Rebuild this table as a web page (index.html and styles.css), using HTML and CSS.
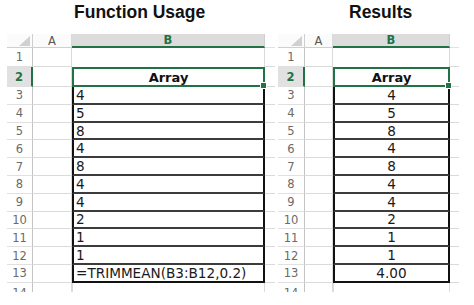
FILE: index.html
```html
<!DOCTYPE html>
<html>
<head>
<meta charset="utf-8">
<link rel="stylesheet" href="styles.css">
</head>
<body>
<div class="page">
  <section class="panel panel--left">
    <h1 class="title title--left">Function Usage</h1>
    <div class="sheet sheet--left">
      <div class="c corner"><svg class="tri" width="11" height="10" viewBox="0 0 11 10"><polygon points="11,0 11,10 0,10" fill="#d0d0d0"/></svg></div>
      <div class="c ch">A</div>
      <div class="c ch ch--sel">B</div>
      <div class="c x xh"></div>

      <div class="c rh">1</div><div class="c a"></div><div class="c b b--r1"></div><div class="c x"></div>
      <div class="c rh rh--sel">2</div><div class="c a"></div><div class="c b b--sel">Array<span class="handle"></span></div><div class="c x"></div>
      <div class="c rh">3</div><div class="c a"></div><div class="c b d">4</div><div class="c x"></div>
      <div class="c rh">4</div><div class="c a"></div><div class="c b d">5</div><div class="c x"></div>
      <div class="c rh">5</div><div class="c a"></div><div class="c b d">8</div><div class="c x"></div>
      <div class="c rh">6</div><div class="c a"></div><div class="c b d">4</div><div class="c x"></div>
      <div class="c rh">7</div><div class="c a"></div><div class="c b d">8</div><div class="c x"></div>
      <div class="c rh">8</div><div class="c a"></div><div class="c b d">4</div><div class="c x"></div>
      <div class="c rh">9</div><div class="c a"></div><div class="c b d">4</div><div class="c x"></div>
      <div class="c rh">10</div><div class="c a"></div><div class="c b d">2</div><div class="c x"></div>
      <div class="c rh">11</div><div class="c a"></div><div class="c b d">1</div><div class="c x"></div>
      <div class="c rh">12</div><div class="c a"></div><div class="c b d">1</div><div class="c x"></div>
      <div class="c rh">13</div><div class="c a"></div><div class="c b d d--last">=TRIMMEAN(B3:B12,0.2)</div><div class="c x"></div>
      <div class="c rh r14">14</div><div class="c a r14"></div><div class="c b r14"></div><div class="c x r14"></div>
    </div>
  </section>

  <section class="panel panel--right">
    <h1 class="title title--right">Results</h1>
    <div class="sheet sheet--right">
      <div class="c corner"><svg class="tri" width="11" height="10" viewBox="0 0 11 10"><polygon points="11,0 11,10 0,10" fill="#d0d0d0"/></svg></div>
      <div class="c ch">A</div>
      <div class="c ch ch--sel">B</div>
      <div class="c x xh"></div>

      <div class="c rh">1</div><div class="c a"></div><div class="c b b--r1"></div><div class="c x"></div>
      <div class="c rh rh--sel">2</div><div class="c a"></div><div class="c b b--sel">Array<span class="handle"></span></div><div class="c x"></div>
      <div class="c rh">3</div><div class="c a"></div><div class="c b d d--center">4</div><div class="c x"></div>
      <div class="c rh">4</div><div class="c a"></div><div class="c b d d--center">5</div><div class="c x"></div>
      <div class="c rh">5</div><div class="c a"></div><div class="c b d d--center">8</div><div class="c x"></div>
      <div class="c rh">6</div><div class="c a"></div><div class="c b d d--center">4</div><div class="c x"></div>
      <div class="c rh">7</div><div class="c a"></div><div class="c b d d--center">8</div><div class="c x"></div>
      <div class="c rh">8</div><div class="c a"></div><div class="c b d d--center">4</div><div class="c x"></div>
      <div class="c rh">9</div><div class="c a"></div><div class="c b d d--center">4</div><div class="c x"></div>
      <div class="c rh">10</div><div class="c a"></div><div class="c b d d--center">2</div><div class="c x"></div>
      <div class="c rh">11</div><div class="c a"></div><div class="c b d d--center">1</div><div class="c x"></div>
      <div class="c rh">12</div><div class="c a"></div><div class="c b d d--center">1</div><div class="c x"></div>
      <div class="c rh">13</div><div class="c a"></div><div class="c b d d--center d--last">4.00</div><div class="c x"></div>
      <div class="c rh r14">14</div><div class="c a r14"></div><div class="c b r14"></div><div class="c x r14"></div>
    </div>
  </section>
</div>
</body>
</html>
```

FILE: styles.css
```css
html, body {
  margin: 0;
  padding: 0;
  background: #ffffff;
}

body {
  width: 474px;
  height: 305px;
  overflow: hidden;
  font-family: "DejaVu Sans", sans-serif;
}

.page {
  display: flex;
  gap: 3px;
  padding-left: 7px;
}

.panel {
  display: flex;
  flex-direction: column;
}

.title {
  margin: 0;
  height: 34px;
  font-family: "Liberation Sans", Arial, sans-serif;
  font-weight: bold;
  font-size: 17.5px;
  line-height: 24px;
  color: #111;
  white-space: nowrap;
}

.title--left { padding-left: 67px; }
.title--right { padding-left: 71px; }

.sheet {
  display: grid;
  grid-template-rows: 14px 19px 20px repeat(11, 17.8px) 9px;
}

.sheet--left { grid-template-columns: 26px 39px 193px 10px; }
.sheet--right { grid-template-columns: 27px 28px 117px 9px; }

.c {
  box-sizing: border-box;
  border-bottom: 1px solid #dadada;
  border-right: 1px solid #dadada;
  display: flex;
  align-items: center;
  min-width: 0;
  position: relative;
}

.corner {
  background: #fbfbfb;
  border-right-color: #cfcfcf;
  border-bottom-color: #cfcfcf;
  justify-content: flex-end;
  align-items: flex-end;
  padding: 0 2px 1px 0;
}

.tri { display: block; }

.ch {
  justify-content: center;
  font-size: 11.5px;
  color: #555;
  background: #fbfbfb;
  border-bottom-color: #cfcfcf;
}

.ch--sel {
  background: #dcdcdc;
  color: #217346;
  font-weight: bold;
  border-bottom: 2px solid #217346;
  border-right-color: #cfcfcf;
}

.x { border-right: none; }
.xh { border-bottom-color: #e2e2e2; }

.rh {
  justify-content: center;
  font-size: 11.5px;
  color: #6a6a6a;
  border-right-color: #c4c4c4;
  border-bottom-color: #e0e0e0;
}

.rh--sel {
  background: #e1e1e1;
  color: #217346;
  font-weight: bold;
  border-right: 2px solid #217346;
}

.b--r1 { border-bottom: none; }

.b--sel {
  border: 2px solid #217346;
  justify-content: center;
  font-weight: bold;
  font-size: 13px;
  color: #111;
}

.handle {
  position: absolute;
  right: -4px;
  bottom: -4px;
  width: 5px;
  height: 5px;
  background: #217346;
  border: 1px solid #ffffff;
  z-index: 2;
}

.d {
  border-left: 2px solid #111;
  border-right: 2px solid #111;
  border-bottom: 2px solid #3c3c3c;
  padding: 0 2px;
  font-size: 13.6px;
  color: #1a1a1a;
  white-space: nowrap;
}

.d--center { justify-content: center; }
.d--last { border-bottom-color: #111; }

.r14 {
  border-bottom: none;
  align-items: flex-start;
  overflow: hidden;
  line-height: 1;
  padding-top: 4px;
}

.rh.r14 { padding-top: 5px; }
.b.r14 { border-left: 1px solid #dadada; }
```
